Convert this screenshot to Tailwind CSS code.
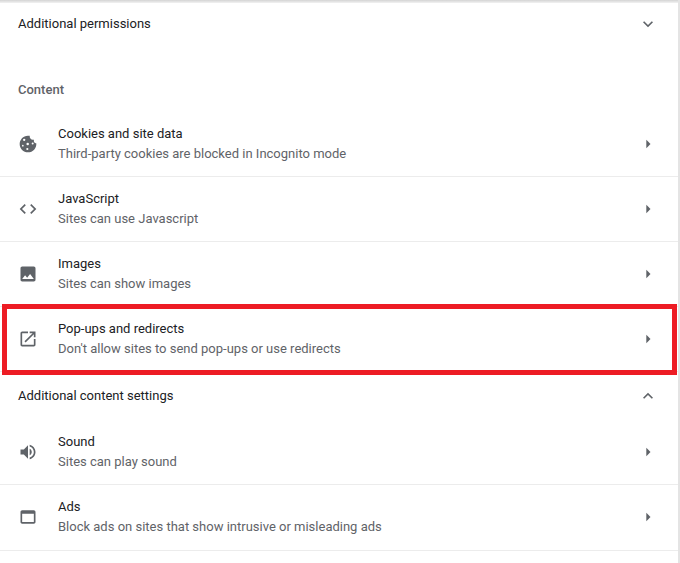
<!DOCTYPE html>
<html lang="en">
<head>
  <meta charset="UTF-8" />
  <title>Site settings</title>
  <script src="https://cdn.jsdelivr.net/npm/@tailwindcss/browser@4"></script>
</head>
<body class="bg-white font-['Roboto',sans-serif] text-[13px] leading-[20px] text-[#202124]">
  <div class="relative w-[680px] h-[563px] overflow-hidden">
    <!-- page column -->
    <div class="w-[680px] h-full border-r-2 border-[#e4e4e4]">
      <div class="h-[3px] bg-gradient-to-b from-[#d4d4d4] to-[#f2f2f2]"></div>

      <div class="h-[42px] pl-[18px] pr-5 flex items-center justify-between">
        <span>Additional permissions</span>
        <svg class="w-5 h-5 fill-[#5f6368]" viewBox="0 0 24 24"><path d="M7.41 8.59L12 13.17l4.59-4.58L18 10l-6 6-6-6 1.41-1.41z"/></svg>
      </div>

      <div class="mt-[23px] h-[44px] pl-[18px] flex items-center font-medium text-[#5f6368]">Content</div>

      <!-- Content rows -->
      <div class="h-[65px] pl-[18px] pr-5 flex items-center border-b border-[#ececec]">
        <svg class="w-5 h-5 fill-[#5f6368] mr-5 shrink-0" viewBox="0 0 24 24">
          <path d="M21.95 10.99c-1.79-.03-3.7-1.95-2.68-4.22-2.97 1-5.78-1.59-5.19-4.56C7.11.74 2 6.41 2 12c0 5.52 4.48 10 10 10 5.89 0 10.54-5.08 9.95-11.01z"/>
          <circle class="fill-white" cx="7.4" cy="7" r="1.4"/>
          <circle class="fill-white" cx="11.6" cy="12" r="1.5"/>
          <circle class="fill-white" cx="17.6" cy="11.4" r="1.2"/>
          <circle class="fill-white" cx="5.8" cy="14" r="1"/>
          <circle class="fill-white" cx="11.2" cy="18" r="1.3"/>
        </svg>
        <div class="flex-1">
          <div>Cookies and site data</div>
          <div class="text-[#5f6368]">Third-party cookies are blocked in Incognito mode</div>
        </div>
        <svg class="w-5 h-5 fill-[#5f6368]" viewBox="0 0 24 24"><path d="M10 17l5-5-5-5v10z"/></svg>
      </div>
      <div class="h-[65px] pl-[18px] pr-5 flex items-center border-b border-[#ececec]">
        <svg class="w-5 h-5 fill-[#5f6368] mr-5 shrink-0" viewBox="0 0 24 24"><path d="M9.4 16.6L4.8 12l4.6-4.6L8 6l-6 6 6 6 1.4-1.4zm5.2 0l4.6-4.6-4.6-4.6L16 6l6 6-6 6-1.4-1.4z"/></svg>
        <div class="flex-1">
          <div>JavaScript</div>
          <div class="text-[#5f6368]">Sites can use Javascript</div>
        </div>
        <svg class="w-5 h-5 fill-[#5f6368]" viewBox="0 0 24 24"><path d="M10 17l5-5-5-5v10z"/></svg>
      </div>
      <div class="h-[65px] pl-[18px] pr-5 flex items-center border-b border-[#ececec]">
        <svg class="w-5 h-5 fill-[#5f6368] mr-5 shrink-0" viewBox="0 0 24 24"><path d="M21 19V5c0-1.1-.9-2-2-2H5c-1.1 0-2 .9-2 2v14c0 1.1.9 2 2 2h14c1.1 0 2-.9 2-2zM8.5 13.5l2.5 3.01L14.5 12l4.5 6H5l3.5-4.5z"/></svg>
        <div class="flex-1">
          <div>Images</div>
          <div class="text-[#5f6368]">Sites can show images</div>
        </div>
        <svg class="w-5 h-5 fill-[#5f6368]" viewBox="0 0 24 24"><path d="M10 17l5-5-5-5v10z"/></svg>
      </div>
      <div class="h-[65px] pl-[18px] pr-5 flex items-center border-b border-[#ececec]">
        <svg class="w-5 h-5 fill-[#5f6368] mr-5 shrink-0" viewBox="0 0 24 24"><path d="M19 19H5V5h7V3H5c-1.11 0-2 .9-2 2v14c0 1.1.89 2 2 2h14c1.1 0 2-.9 2-2v-7h-2v7zM14 3v2h3.59l-9.83 9.83 1.41 1.41L19 6.41V10h2V3h-7z"/></svg>
        <div class="flex-1">
          <div>Pop-ups and redirects</div>
          <div class="text-[#5f6368]">Don't allow sites to send pop-ups or use redirects</div>
        </div>
        <svg class="w-5 h-5 fill-[#5f6368]" viewBox="0 0 24 24"><path d="M10 17l5-5-5-5v10z"/></svg>
      </div>

      <div class="h-12 pl-[18px] pr-5 flex items-center justify-between">
        <span>Additional content settings</span>
        <svg class="w-5 h-5 fill-[#5f6368]" viewBox="0 0 24 24"><path d="M12 8l-6 6 1.41 1.41L12 10.83l4.59 4.58L18 14z"/></svg>
      </div>

      <div class="h-[65px] pl-[18px] pr-5 flex items-center border-b border-[#ececec]">
        <svg class="w-5 h-5 fill-[#5f6368] mr-5 shrink-0" viewBox="0 0 24 24"><path d="M3 9v6h4l5 5V4L7 9H3zm13.5 3c0-1.77-1.02-3.29-2.5-4.03v8.05c1.48-.73 2.5-2.25 2.5-4.02zM14 3.23v2.06c2.89.86 5 3.54 5 6.71s-2.11 5.85-5 6.71v2.06c4.01-.91 7-4.49 7-8.77s-2.99-7.86-7-8.77z"/></svg>
        <div class="flex-1">
          <div>Sound</div>
          <div class="text-[#5f6368]">Sites can play sound</div>
        </div>
        <svg class="w-5 h-5 fill-[#5f6368]" viewBox="0 0 24 24"><path d="M10 17l5-5-5-5v10z"/></svg>
      </div>
      <div class="h-[66px] pb-px pl-[18px] pr-5 flex items-center border-b border-[#ececec]">
        <svg class="w-5 h-5 fill-[#5f6368] mr-5 shrink-0" viewBox="0 0 24 24"><path d="M19 4H5c-1.11 0-2 .9-2 2v12c0 1.1.89 2 2 2h14c1.1 0 2-.9 2-2V6c0-1.1-.89-2-2-2zm0 14H5V8h14v10z"/></svg>
        <div class="flex-1">
          <div>Ads</div>
          <div class="text-[#5f6368]">Block ads on sites that show intrusive or misleading ads</div>
        </div>
        <svg class="w-5 h-5 fill-[#5f6368]" viewBox="0 0 24 24"><path d="M10 17l5-5-5-5v10z"/></svg>
      </div>
    </div>

    <!-- red highlight drawn over the row -->
    <div class="absolute left-[2px] top-[304px] w-[675px] h-[71px] border-[5px] border-[#ed1c24]"></div>
  </div>
</body>
</html>
